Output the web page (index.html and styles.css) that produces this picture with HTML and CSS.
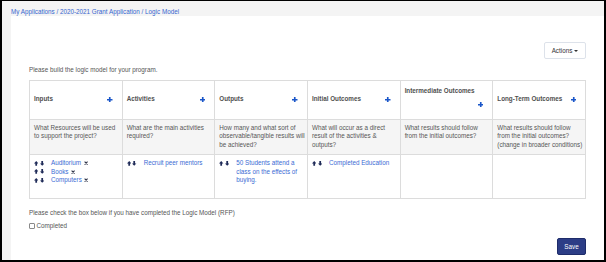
FILE: index.html
```html
<!DOCTYPE html>
<html lang="en">
<head>
<meta charset="utf-8">
<title>Logic Model</title>
<link rel="stylesheet" href="styles.css">
</head>
<body>
<div class="breadcrumb"><a href="#">My Applications</a> / <a href="#">2020-2021 Grant Application</a> / <a href="#">Logic Model</a></div>
<main class="panel">
  <div class="toolbar">
    <button class="btn-actions">Actions <span class="caret"></span></button>
  </div>
  <p class="intro">Please build the logic model for your program.</p>
  <table class="model">
    <thead>
      <tr>
        <th><div class="hd"><span>Inputs</span><svg class="plus" viewBox="0 0 10 10"><path d="M5 0V10M0 5H10"/></svg></div></th>
        <th><div class="hd"><span>Activities</span><svg class="plus" viewBox="0 0 10 10"><path d="M5 0V10M0 5H10"/></svg></div></th>
        <th><div class="hd"><span>Outputs</span><svg class="plus" viewBox="0 0 10 10"><path d="M5 0V10M0 5H10"/></svg></div></th>
        <th><div class="hd"><span>Initial Outcomes</span><svg class="plus" viewBox="0 0 10 10"><path d="M5 0V10M0 5H10"/></svg></div></th>
        <th><div class="hd hd-wrap"><span class="hd-label">Intermediate Outcomes</span><svg class="plus" viewBox="0 0 10 10"><path d="M5 0V10M0 5H10"/></svg></div></th>
        <th><div class="hd"><span>Long-Term Outcomes</span><svg class="plus" viewBox="0 0 10 10"><path d="M5 0V10M0 5H10"/></svg></div></th>
      </tr>
    </thead>
    <tbody>
      <tr class="desc">
        <td>What Resources will be used to support the project?</td>
        <td>What are the main activities required?</td>
        <td>How many and what sort of observable/tangible results will be achieved?</td>
        <td>What will occur as a direct result of the activities &amp; outputs?</td>
        <td>What results should follow from the initial outcomes?</td>
        <td>What results should follow from the initial outcomes? (change in broader conditions)</td>
      </tr>
      <tr class="data">
        <td>
          <div class="item"><span class="arrows"><svg class="arr" viewBox="0 0 10 11"><path d="M5 0L10 5.5H7V11H3V5.5H0Z"/></svg><svg class="arr" viewBox="0 0 10 11"><path d="M5 11L10 5.5H7V0H3V5.5H0Z"/></svg></span><a href="#">Auditorium</a><svg class="rm" viewBox="0 0 10 10"><path d="M1.5 1.5L8.5 8.5M8.5 1.5L1.5 8.5"/></svg></div>
          <div class="item"><span class="arrows"><svg class="arr" viewBox="0 0 10 11"><path d="M5 0L10 5.5H7V11H3V5.5H0Z"/></svg><svg class="arr" viewBox="0 0 10 11"><path d="M5 11L10 5.5H7V0H3V5.5H0Z"/></svg></span><a href="#">Books</a><svg class="rm" viewBox="0 0 10 10"><path d="M1.5 1.5L8.5 8.5M8.5 1.5L1.5 8.5"/></svg></div>
          <div class="item"><span class="arrows"><svg class="arr" viewBox="0 0 10 11"><path d="M5 0L10 5.5H7V11H3V5.5H0Z"/></svg><svg class="arr" viewBox="0 0 10 11"><path d="M5 11L10 5.5H7V0H3V5.5H0Z"/></svg></span><a href="#">Computers</a><svg class="rm" viewBox="0 0 10 10"><path d="M1.5 1.5L8.5 8.5M8.5 1.5L1.5 8.5"/></svg></div>
        </td>
        <td>
          <div class="item"><span class="arrows"><svg class="arr" viewBox="0 0 10 11"><path d="M5 0L10 5.5H7V11H3V5.5H0Z"/></svg><svg class="arr" viewBox="0 0 10 11"><path d="M5 11L10 5.5H7V0H3V5.5H0Z"/></svg></span><a href="#">Recruit peer mentors</a></div>
        </td>
        <td>
          <div class="item"><span class="arrows"><svg class="arr" viewBox="0 0 10 11"><path d="M5 0L10 5.5H7V11H3V5.5H0Z"/></svg><svg class="arr" viewBox="0 0 10 11"><path d="M5 11L10 5.5H7V0H3V5.5H0Z"/></svg></span><a href="#">50 Students attend a class on the effects of buying.</a></div>
        </td>
        <td>
          <div class="item"><span class="arrows"><svg class="arr" viewBox="0 0 10 11"><path d="M5 0L10 5.5H7V11H3V5.5H0Z"/></svg><svg class="arr" viewBox="0 0 10 11"><path d="M5 11L10 5.5H7V0H3V5.5H0Z"/></svg></span><a href="#">Completed Education</a></div>
        </td>
        <td></td>
        <td></td>
      </tr>
    </tbody>
  </table>
  <p class="note">Please check the box below if you have completed the Logic Model (RFP)</p>
  <label class="check"><input type="checkbox"> Completed</label>
  <div class="footer">
    <button class="btn-save">Save</button>
  </div>
</main>
</body>
</html>
```
FILE: styles.css
```css
* { box-sizing: border-box; }
html { margin: 0; padding: 0; }
body {
  margin: 0;
  height: 262px;
  border-style: solid;
  border-color: #000;
  border-width: 1px 2px 2px 2px;
  background: #f4f4f4;
  display: flex;
  flex-direction: column;
  font-family: "Liberation Sans", Arial, sans-serif;
  font-size: 6.3px;
  line-height: 8.5px;
  color: #555;
}
a { color: #3566cf; text-decoration: none; }
.breadcrumb {
  height: 15px;
  padding: 6.5px 0 0 9px;
  color: #3566cf;
  white-space: nowrap;
}
.panel {
  flex: 1;
  margin-left: 9px;
  background: #fff;
  padding: 26px 18px 0 18px;
  display: flex;
  flex-direction: column;
}
.toolbar { display: flex; justify-content: flex-end; }
.btn-actions {
  width: 42px;
  height: 17px;
  padding: 0;
  border: 1px solid #dde2ea;
  border-radius: 2px;
  background: #fff;
  color: #333;
  font-family: inherit;
  font-size: 6.3px;
  display: flex;
  align-items: center;
  justify-content: center;
  gap: 2px;
}
.caret {
  width: 0;
  height: 0;
  border-left: 2.2px solid transparent;
  border-right: 2.2px solid transparent;
  border-top: 2.5px solid #333;
}
.intro { margin: 6px 0 0; line-height: 9px; }
.model {
  margin-top: 5.5px;
  width: 100%;
  table-layout: fixed;
  border-collapse: collapse;
  border: 1px solid #dcdcdc;
}
.model th, .model td { border: 1px solid #dcdcdc; }
.model th {
  height: 39px;
  padding: 0 9px 0 4px;
  text-align: left;
  vertical-align: middle;
  font-weight: bold;
  color: #4f4f4f;
}
.hd { display: flex; align-items: center; justify-content: space-between; }
.hd-wrap { flex-wrap: wrap; margin-top: -5px; }
.hd-wrap .hd-label { width: 100%; }
.hd-wrap .plus { margin-left: auto; margin-top: 6px; }
.plus {
  width: 5.5px;
  height: 5.5px;
  flex: none;
  display: block;
}
.plus path { stroke: #1b57c9; stroke-width: 3; fill: none; }
.desc td {
  background: #f5f5f5;
  padding: 4.5px 1px 5px 4px;
  vertical-align: top;
  line-height: 8.3px;
  height: 35px;
}
.data td {
  padding: 4.5px 4px 13px;
  vertical-align: top;
  height: 43px;
}
.item { display: flex; align-items: flex-start; }
.item a { color: #3a6bd4; }
.arrows {
  flex: none;
  display: flex;
  gap: 1.4px;
  width: 17px;
  padding-top: 1.6px;
}
.arr { width: 4.4px; height: 4.9px; display: block; }
.arr path { fill: #1f2b58; }
.rm {
  flex: none;
  display: block;
  width: 4.2px;
  height: 4.2px;
  margin: 1.7px 0 0 2.5px;
}
.rm path { stroke: #262b40; stroke-width: 2.6; fill: none; }
.note { margin: 9.5px 0 0; line-height: 9px; }
.check {
  margin-top: 4px;
  line-height: 9px;
  display: flex;
  align-items: center;
  gap: 2px;
}
.check input {
  appearance: none;
  -webkit-appearance: none;
  margin: 0;
  width: 5.5px;
  height: 5.5px;
  border: 1px solid #8a8a8a;
  border-radius: 1px;
  background: #fff;
}
.footer { display: flex; justify-content: flex-end; margin-top: 7.5px; }
.btn-save {
  width: 29px;
  height: 17px;
  padding: 0;
  border: 1px solid #1e2c6a;
  border-radius: 2px;
  background: #2c3d86;
  color: #fff;
  font-family: inherit;
  font-size: 6.3px;
}
```
